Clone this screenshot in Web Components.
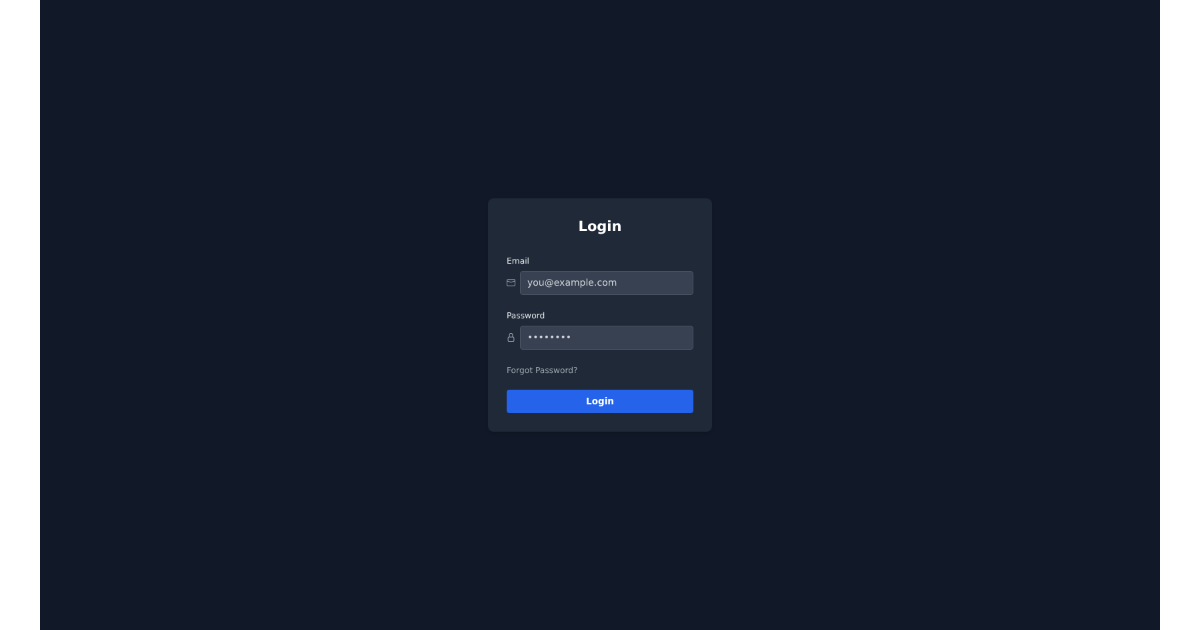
<!DOCTYPE html>
<html>
<head>
<meta charset="utf-8">
<title>Login</title>
<style>
html, body { margin: 0; height: 100%; background: #fff; }
body { font-family: "DejaVu Sans", sans-serif; text-rendering: geometricPrecision; }
</style>
</head>
<body>
<login-page>
  <login-card heading="Login">
    <form-field label="Email" icon="mail">you@example.com</form-field>
    <form-field label="Password" icon="lock" secret>••••••••</form-field>
    <a slot="footer" href="#">Forgot Password?</a>
  </login-card>
</login-page>

<script>
const icons = {
  mail: '<rect x=".6" y="2.2" width="14.8" height="11.6" rx="1.8"/><path d="M.6 4.8l7.4 2.6 7.4-2.6"/>',
  lock: '<rect x="2.6" y="7.4" width="10.8" height="8" rx="1.6"/><path d="M5 7.4V3.5a3 3 0 0 1 6 0v3.9"/>'
};

class LoginPage extends HTMLElement {
  constructor() {
    super();
    this.attachShadow({mode: 'open'}).innerHTML = `
<style>
:host {
  display: flex;
  align-items: center;
  justify-content: center;
  height: 630px;
  margin: 0 40px;
  background-color: #111827;
}
</style>
<slot></slot>`;
  }
}

// drawn at 3:2 and scaled down, the soft text and borders of the reference come from that
class LoginCard extends HTMLElement {
  constructor() {
    super();
    this.attachShadow({mode: 'open'}).innerHTML = `
<style>
:host {
  display: block;
  flex: none;
  box-sizing: border-box;
  width: 336px;
  height: 350px;
  padding: 28px;
  background-color: #1f2937;
  border-radius: 8px;
  box-shadow: 0 4px 6px -1px rgba(0,0,0,.1), 0 2px 4px -2px rgba(0,0,0,.1);
  transform: scale(.66667);
  will-change: transform;
}
h1 {
  margin: 0 0 30.5px;
  font-size: 21px;
  line-height: 28px;
  font-weight: 700;
  color: #fff;
  text-align: center;
}
.fields { display: flex; flex-direction: column; gap: 23.5px; }
.footer { margin-top: 23.5px; height: 14px; line-height: 14px; font-size: 12.25px; }
::slotted(a) { color: #9ca3af; text-decoration: none; }
button {
  display: block;
  width: 100%;
  height: 35px;
  margin-top: 22px;
  padding: 0 0 1px;
  border: none;
  border-radius: 4px;
  background-color: #2563eb;
  color: #fff;
  font: 700 13.5px "DejaVu Sans", sans-serif;
}
</style>
<h1></h1>
<div class="fields"><slot></slot></div>
<div class="footer"><slot name="footer"></slot></div>
<button type="button"></button>`;
    const heading = this.getAttribute('heading');
    this.shadowRoot.querySelector('h1').textContent = heading;
    this.shadowRoot.querySelector('button').textContent = heading;
  }
}

class FormField extends HTMLElement {
  constructor() {
    super();
    this.attachShadow({mode: 'open'}).innerHTML = `
<style>
:host { display: block; }
label {
  display: block;
  height: 14px;
  line-height: 15px;
  margin-bottom: 8px;
  font-size: 12.25px;
  color: #e5e7eb;
}
.row { display: flex; align-items: center; gap: 7px; }
svg {
  flex: none;
  width: 13px;
  height: 13px;
  fill: none;
  stroke: #9ca3af;
  stroke-width: 1.3;
}
.box {
  flex: 1;
  box-sizing: border-box;
  height: 36.5px;
  padding: 0 10px;
  line-height: 34.5px;
  font-size: 14px;
  color: #d1d5db;
  background-color: #374151;
  border: 1px solid #4b5563;
  border-radius: 4px;
}
</style>
<label></label>
<div class="row">
  <svg viewBox="0 0 16 16"></svg>
  <div class="box"><slot></slot></div>
</div>`;
    this.shadowRoot.querySelector('label').textContent = this.getAttribute('label');
    this.shadowRoot.querySelector('svg').innerHTML = icons[this.getAttribute('icon')];
  }
}

customElements.define('login-page', LoginPage);
customElements.define('login-card', LoginCard);
customElements.define('form-field', FormField);
</script>
</body>
</html>
